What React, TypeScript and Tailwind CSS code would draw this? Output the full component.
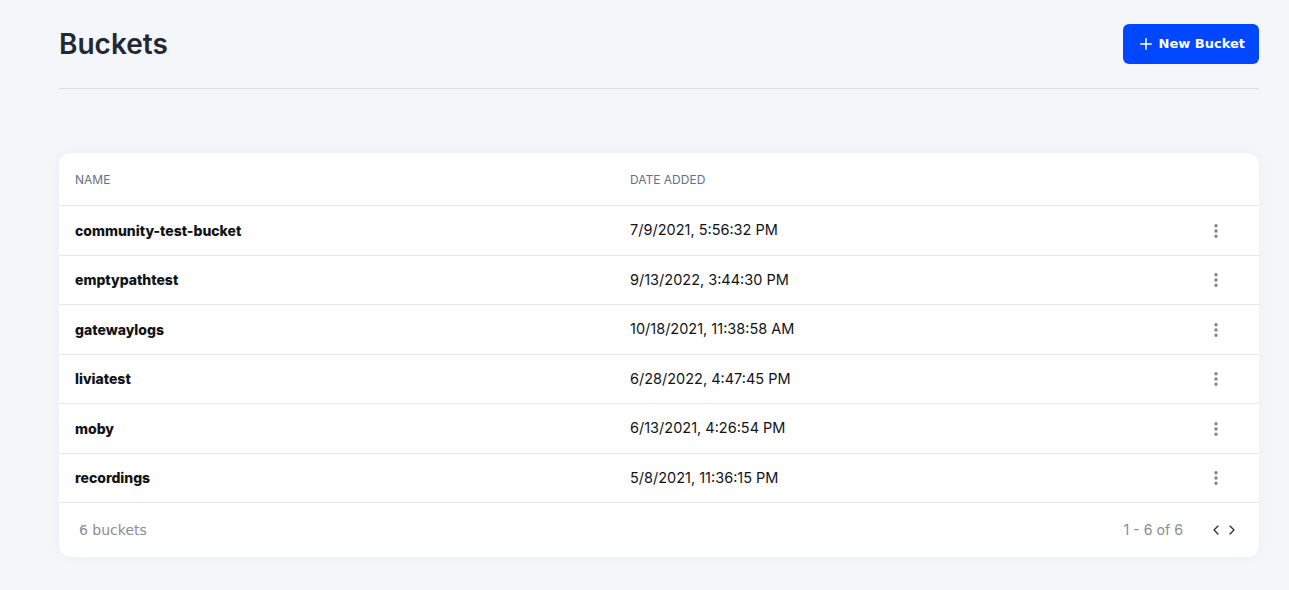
import { ChevronLeft, ChevronRight, EllipsisVertical, Plus } from "lucide-react";

const BUCKETS = [
  { name: "community-test-bucket", added: "7/9/2021, 5:56:32 PM" },
  { name: "emptypathtest", added: "9/13/2022, 3:44:30 PM" },
  { name: "gatewaylogs", added: "10/18/2021, 11:38:58 AM" },
  { name: "liviatest", added: "6/28/2022, 4:47:45 PM" },
  { name: "moby", added: "6/13/2021, 4:26:54 PM" },
  { name: "recordings", added: "5/8/2021, 11:36:15 PM" },
];

export default function App() {
  return (
    <div className="min-h-[590px] bg-[#f5f6fa] pl-[59px] pr-[30px] pt-6 font-['Inter',sans-serif]">
      <div className="flex items-center justify-between border-b border-[#dcdee4] pb-6">
        <h1 className="text-[28px] font-semibold leading-10 text-[#212934]">Buckets</h1>
        <button className="flex h-10 items-center gap-1 rounded-md bg-[#0047ff] px-[14px] font-['DejaVu_Sans',sans-serif] text-[13px] font-bold text-white">
          <Plus size={18} strokeWidth={2} />
          New Bucket
        </button>
      </div>

      <div className="mt-16 overflow-hidden rounded-xl bg-white shadow-[0_0_12px_rgba(30,40,80,0.04)]">
        <div className="flex h-[53px] items-center border-b border-[#e6e7ea] px-4 pt-0.5 text-xs uppercase text-[#667085]">
          <div className="w-[555px]">Name</div>
          <div>Date added</div>
        </div>
        {BUCKETS.map((b) => (
          <div
            key={b.name}
            className="flex h-[49.5px] items-center border-b border-[#e6e7ea] px-4 pt-px text-sm text-[#111318]"
          >
            <div className="w-[555px] font-extrabold">{b.name}</div>
            <div className="flex-1 text-[14.5px]">{b.added}</div>
            <EllipsisVertical size={18} className="mr-[18px] text-[#7a8291]" strokeWidth={2.5} />
          </div>
        ))}
        <div className="flex h-[54px] items-center pl-5 pr-[19px] text-sm text-[#8a8d94]">
          <div className="flex-1 font-['DejaVu_Sans',sans-serif]">6 buckets</div>
          <div className="mr-[25px] text-[14.2px]">1 - 6 of 6</div>
          <div className="flex items-center text-[#2a2f38]">
            <ChevronLeft size={16} strokeWidth={2} />
            <ChevronRight size={16} strokeWidth={2} />
          </div>
        </div>
      </div>
    </div>
  );
}
